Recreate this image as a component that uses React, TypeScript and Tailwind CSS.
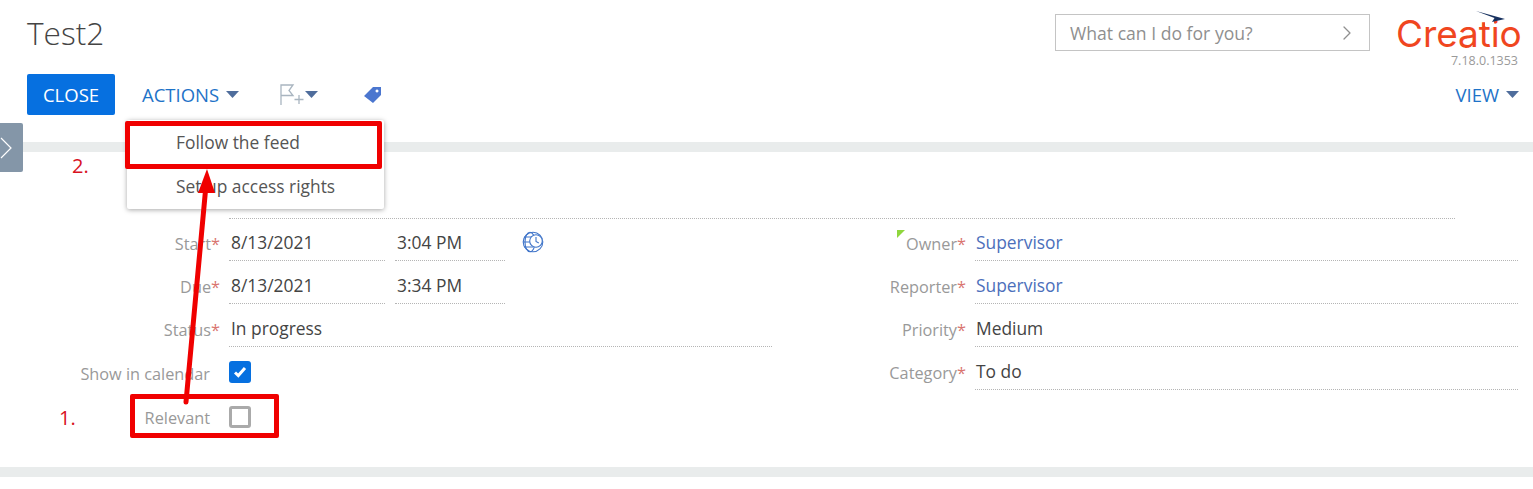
import { ChevronRight } from 'lucide-react';

const font = "font-['Open_Sans',sans-serif]";

function Caret({ className }: { className: string }) {
  return (
    <svg width="13" height="7" viewBox="0 0 13 7" className={className}>
      <path d="M0 0h13L6.500 7z" fill="#4f6d9c" />
    </svg>
  );
}

function Label({ text, required = true }: { text: string; required?: boolean }) {
  return (
    <div className="w-full pt-[4px] pr-[9px] text-right text-[16.300px] leading-[26px] text-[#999999]">
      {text}
      {required && <span className="text-[#d9756f]">*</span>}
    </div>
  );
}

function Value({ text, link, className }: { text: string; link?: boolean; className: string }) {
  return (
    <div
      className={`h-[34px] border-b border-dotted border-[#b5b5b5] pt-[2px] text-[17.400px] leading-[26px] ${
        link ? 'text-[#4c6fbb]' : 'text-[#444444]'
      } ${className}`}
    >
      {text}
    </div>
  );
}

function Globe() {
  return (
    <svg width="22" height="22" viewBox="0 0 22 22" fill="none" stroke="#3f74c9" strokeWidth="1.100">
      <circle cx="11" cy="11" r="9.800" />
      <ellipse cx="8" cy="11" rx="5" ry="9.800" />
      <path d="M2 6h8M1.200 11h8M2 16h9" />
      <circle cx="14" cy="10" r="6.300" fill="#ffffff" />
      <path d="M14 6v4.500l2.800 1.500" />
    </svg>
  );
}

export default function App() {
  return (
    <div className={`relative h-[489px] w-[1533px] overflow-hidden bg-white ${font}`}>
      {/* header */}
      <div className="flex h-[142px] justify-between pl-[27px] pr-[12px]">
        <div>
          <h1 className="mt-[13px] text-[31.600px] font-light leading-[40px] text-[#444444]">Test2</h1>
          <div className="mt-[21px] flex items-center">
            <button className="h-[41px] w-[88px] rounded-[2px] bg-[#0670e0] text-[18.500px] text-white">CLOSE</button>
            <span className="ml-[27px] text-[18.500px] text-[#1e73c8]">ACTIONS</span>
            <Caret className="ml-[7px]" />
            <svg width="24" height="21" viewBox="0 0 24 21" fill="none" stroke="#a9b5c0" strokeWidth="1.300" className="ml-[41px]">
              <path d="M1 21V1h12L9 6.500l4 5H1M14.500 15.500h9M19 11v9" />
            </svg>
            <Caret className="ml-[1px]" />
            <svg width="20" height="18" viewBox="0 0 20 18" className="ml-[45px]">
              <path d="M1 10L10 1h8v8l-8 8z M14 3.500a1.500 1.500 0 1 0 .01 0z" fill="#4b76cf" fillRule="evenodd" />
            </svg>
          </div>
        </div>
        <div className="flex flex-col items-end">
          <div className="mt-[14px] flex items-start">
            <div className="flex h-[37px] w-[315px] items-center justify-between border border-[#c4c4c4] pl-[14px] pr-[10px] text-[17.600px] text-[#8f8f8f]">
              <span className="mt-[2px]">What can I do for you?</span>
              <ChevronRight size={24} strokeWidth={1.300} className="text-[#8f8f8f]" />
            </div>
            <div className="relative ml-[26px] w-[125px]">
              <div className="mt-[2px] text-[37px] leading-[36px] tracking-[-0.1px] text-[#f0461f] font-['Inter',sans-serif]">Creatio</div>
              {/* the logo's i has no dot: the arrow sits in its place */}
              <div className="absolute left-[89px] top-[3px] h-[9px] w-[9px] bg-white" />
              <svg width="30" height="13" viewBox="0 0 30 13" className="absolute left-[80px] top-[-3px]">
                <path d="M0 0l29 8-13 3 2.500-4z" fill="#17315f" />
              </svg>
            </div>
          </div>
          <div className="mt-[1px] pr-[3px] text-[12.500px] leading-[16px] text-[#9a9a9a]">7.18.0.1353</div>
          <div className="mt-[12px] flex items-center pr-[2px]">
            <span className="text-[18.500px] text-[#1e73c8]">VIEW</span>
            <Caret className="ml-[7px]" />
          </div>
        </div>
      </div>

      <div className="h-[10px] bg-[#e9ecec]" />

      {/* form */}
      <div className="h-[315px] pt-[33px]">
        <div className="ml-[229px] mr-[78px] h-[34px] border-b border-dotted border-[#b5b5b5]" />
        <div className="mt-[8px] grid grid-cols-[229px_543px_1fr] grid-rows-[34px_34px_34px_34px_34px] gap-y-[9px] pr-[15px]">
          <Label text="Start" />
          <div className="flex">
            <Value text="8/13/2021" className="w-[156px] pl-[2px]" />
            <Value text="3:04 PM" className="ml-[10px] w-[110px] pl-[2px]" />
            <div className="ml-[17px] mt-[4px]"><Globe /></div>
          </div>
          <div className="flex">
            <div className="relative w-[203px]">
              <Label text="Owner" />
              <div className="absolute left-[125px] top-[3px] border-r-[8px] border-t-[8px] border-r-transparent border-t-[#8fd63d]" />
            </div>
            <Value text="Supervisor" link className="flex-1 pl-[1px]" />
          </div>

          <Label text="Due" />
          <div className="flex">
            <Value text="8/13/2021" className="w-[156px] pl-[2px]" />
            <Value text="3:34 PM" className="ml-[10px] w-[110px] pl-[2px]" />
          </div>
          <div className="flex">
            <div className="w-[203px]"><Label text="Reporter" /></div>
            <Value text="Supervisor" link className="flex-1 pl-[1px]" />
          </div>

          <Label text="Status" />
          <Value text="In progress" className="w-[543px] pl-[2px]" />
          <div className="flex">
            <div className="w-[203px]"><Label text="Priority" /></div>
            <Value text="Medium" className="flex-1 pl-[1px]" />
          </div>

          <div className="pr-[10px] pt-[1px]"><Label text="Show in calendar" required={false} /></div>
          <div className="pt-[5px]">
            <div className="flex h-[22px] w-[22px] items-center justify-center rounded-[3px] bg-[#0670e0]">
              <svg width="14" height="12" viewBox="0 0 14 12" fill="none" stroke="#ffffff" strokeWidth="3">
                <path d="M2 6.500l3.300 3L12 2" />
              </svg>
            </div>
          </div>
          <div className="flex">
            <div className="w-[203px]"><Label text="Category" /></div>
            <Value text="To do" className="flex-1 pl-[1px]" />
          </div>

          <div className="pr-[10px] pt-[2px]"><Label text="Relevant" required={false} /></div>
          <div className="pt-[7px]">
            <div className="h-[22px] w-[22px] rounded-[3px] border-[3px] border-[#aaaaaa] bg-white" />
          </div>
        </div>
      </div>

      <div className="h-[10px] bg-[#e9ecec]" />

      {/* collapsed side panel tab */}
      <div className="absolute left-0 top-[123px] flex h-[49px] w-[23px] items-center rounded-r-[2px] bg-[#8496a8]">
        <svg width="12" height="24" viewBox="0 0 12 24" fill="none" stroke="#ffffff" strokeWidth="1.200">
          <path d="M1 2l10 10-10 10" />
        </svg>
      </div>

      {/* actions menu */}
      <div className="absolute left-[127px] top-[120px] h-[89px] w-[257px] rounded-[2px] bg-white pl-[49px] text-[17.400px] leading-[44px] text-[#555555] shadow-[0_1px_5px_rgba(0,0,0,0.35)]">
        <div>Follow the feed</div>
        <div>Set up access rights</div>
      </div>

      {/* annotations */}
      <div className="absolute left-[125px] top-[121px] h-[48px] w-[257px] rounded-[2px] border-[5px] border-[#f00000]" />
      <div className="absolute left-[130px] top-[394px] h-[44px] w-[149px] rounded-[2px] border-[5px] border-[#f00000]" />
      <svg width="60" height="250" viewBox="0 0 60 250" className="absolute left-[170px] top-[160px]">
        <path d="M16 242L36 25" stroke="#f00000" strokeWidth="5" strokeLinecap="round" />
        <path d="M37 9L28 33h17z" fill="#f00000" />
      </svg>
      <span className="absolute left-[72px] top-[151px] text-[20px] text-[#d8121f]">2.</span>
      <span className="absolute left-[59px] top-[403px] text-[20px] text-[#d8121f]">1.</span>
    </div>
  );
}
